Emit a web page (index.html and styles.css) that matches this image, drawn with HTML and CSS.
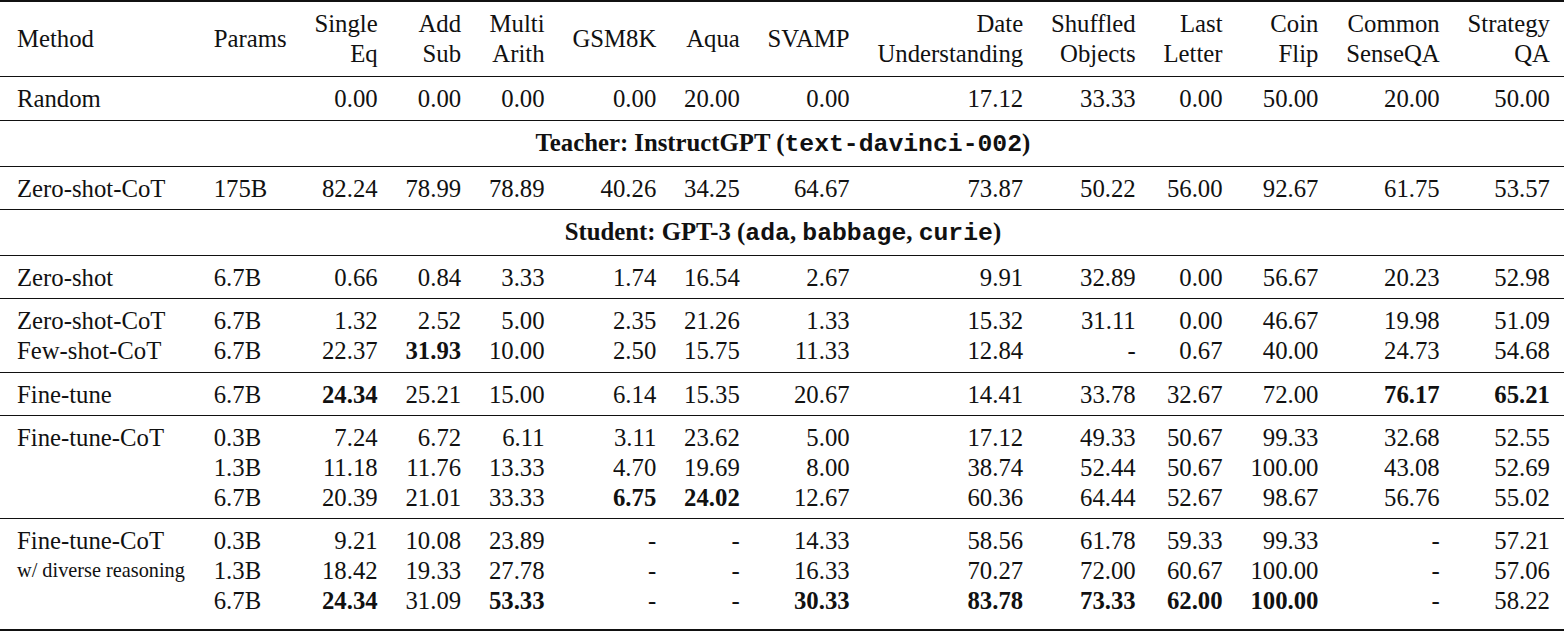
FILE: index.html
```html
<!DOCTYPE html>
<html>
<head>
<meta charset="utf-8">
<link rel="stylesheet" href="styles.css">
</head>
<body>
<table class="tbl">
  <thead>
    <tr>
      <th class="l">Method</th>
      <th class="l">Params</th>
      <th>Single<br>Eq</th>
      <th>Add<br>Sub</th>
      <th>Multi<br>Arith</th>
      <th>GSM8K</th>
      <th>Aqua</th>
      <th>SVAMP</th>
      <th>Date<br>Understanding</th>
      <th>Shuffled<br>Objects</th>
      <th>Last<br>Letter</th>
      <th>Coin<br>Flip</th>
      <th>Common<br>SenseQA</th>
      <th>Strategy<br>QA</th>
    </tr>
  </thead>
  <tbody>
    <tr><td class="l">Random</td><td class="l"></td><td>0.00</td><td>0.00</td><td>0.00</td><td>0.00</td><td>20.00</td><td>0.00</td><td>17.12</td><td>33.33</td><td>0.00</td><td>50.00</td><td>20.00</td><td>50.00</td></tr>
  </tbody>
  <tbody>
    <tr><td class="sec" colspan="14"><b>Teacher: InstructGPT (<span class="code">text-davinci-002</span>)</b></td></tr>
  </tbody>
  <tbody>
    <tr><td class="l">Zero-shot-CoT</td><td class="l">175B</td><td>82.24</td><td>78.99</td><td>78.89</td><td>40.26</td><td>34.25</td><td>64.67</td><td>73.87</td><td>50.22</td><td>56.00</td><td>92.67</td><td>61.75</td><td>53.57</td></tr>
  </tbody>
  <tbody>
    <tr><td class="sec" colspan="14"><b>Student: GPT-3 (<span class="code">ada</span>, <span class="code">babbage</span>, <span class="code">curie</span>)</b></td></tr>
  </tbody>
  <tbody>
    <tr><td class="l">Zero-shot</td><td class="l">6.7B</td><td>0.66</td><td>0.84</td><td>3.33</td><td>1.74</td><td>16.54</td><td>2.67</td><td>9.91</td><td>32.89</td><td>0.00</td><td>56.67</td><td>20.23</td><td>52.98</td></tr>
  </tbody>
  <tbody>
    <tr><td class="l">Zero-shot-CoT</td><td class="l">6.7B</td><td>1.32</td><td>2.52</td><td>5.00</td><td>2.35</td><td>21.26</td><td>1.33</td><td>15.32</td><td>31.11</td><td>0.00</td><td>46.67</td><td>19.98</td><td>51.09</td></tr>
    <tr><td class="l">Few-shot-CoT</td><td class="l">6.7B</td><td>22.37</td><td><b>31.93</b></td><td>10.00</td><td>2.50</td><td>15.75</td><td>11.33</td><td>12.84</td><td>-</td><td>0.67</td><td>40.00</td><td>24.73</td><td>54.68</td></tr>
  </tbody>
  <tbody>
    <tr><td class="l">Fine-tune</td><td class="l">6.7B</td><td><b>24.34</b></td><td>25.21</td><td>15.00</td><td>6.14</td><td>15.35</td><td>20.67</td><td>14.41</td><td>33.78</td><td>32.67</td><td>72.00</td><td><b>76.17</b></td><td><b>65.21</b></td></tr>
  </tbody>
  <tbody>
    <tr><td class="l">Fine-tune-CoT</td><td class="l">0.3B</td><td>7.24</td><td>6.72</td><td>6.11</td><td>3.11</td><td>23.62</td><td>5.00</td><td>17.12</td><td>49.33</td><td>50.67</td><td>99.33</td><td>32.68</td><td>52.55</td></tr>
    <tr><td class="l"></td><td class="l">1.3B</td><td>11.18</td><td>11.76</td><td>13.33</td><td>4.70</td><td>19.69</td><td>8.00</td><td>38.74</td><td>52.44</td><td>50.67</td><td>100.00</td><td>43.08</td><td>52.69</td></tr>
    <tr><td class="l"></td><td class="l">6.7B</td><td>20.39</td><td>21.01</td><td>33.33</td><td><b>6.75</b></td><td><b>24.02</b></td><td>12.67</td><td>60.36</td><td>64.44</td><td>52.67</td><td>98.67</td><td>56.76</td><td>55.02</td></tr>
  </tbody>
  <tbody class="last">
    <tr><td class="l">Fine-tune-CoT</td><td class="l">0.3B</td><td>9.21</td><td>10.08</td><td>23.89</td><td>-</td><td>-</td><td>14.33</td><td>58.56</td><td>61.78</td><td>59.33</td><td>99.33</td><td>-</td><td>57.21</td></tr>
    <tr><td class="l small">w/ diverse reasoning</td><td class="l">1.3B</td><td>18.42</td><td>19.33</td><td>27.78</td><td>-</td><td>-</td><td>16.33</td><td>70.27</td><td>72.00</td><td>60.67</td><td>100.00</td><td>-</td><td>57.06</td></tr>
    <tr><td class="l"></td><td class="l">6.7B</td><td><b>24.34</b></td><td>31.09</td><td><b>53.33</b></td><td>-</td><td>-</td><td><b>30.33</b></td><td><b>83.78</b></td><td><b>73.33</b></td><td><b>62.00</b></td><td><b>100.00</b></td><td>-</td><td>58.22</td></tr>
  </tbody>
</table>
</body>
</html>
```

FILE: styles.css
```css
html, body {
  margin: 0;
  padding: 0;
  background: #fff;
}

body {
  font-family: "Liberation Serif", "Times New Roman", serif;
  font-size: 24.75px;
  color: #111;
}

.tbl {
  border-collapse: collapse;
  border-top: 2px solid #111;
  border-bottom: 2px solid #111;
}

.tbl th,
.tbl td {
  padding: 0 13.9px;
  line-height: 29.7px;
  text-align: right;
  white-space: nowrap;
  vertical-align: middle;
}

.tbl th {
  font-weight: normal;
  padding-top: 7px;
  padding-bottom: 8px;
}

.tbl th:first-child,
.tbl td:first-child {
  padding-left: 17px;
  padding-right: 15px;
}

.tbl .l {
  text-align: left;
}

.tbl tbody {
  border-top: 1px solid #111;
}

.tbl tbody tr:first-child td {
  padding-top: 7px;
}

.tbl tbody tr:last-child td {
  padding-bottom: 5.9px;
}

.tbl tbody.last tr:last-child td {
  padding-bottom: 13.5px;
}

.tbl td.sec {
  text-align: center;
}

.tbl .code {
  font-family: "Liberation Mono", "Courier New", monospace;
  font-weight: bold;
}

.tbl td.small {
  font-size: 20.3px;
}

.tbl b {
  font-weight: bold;
}
```
